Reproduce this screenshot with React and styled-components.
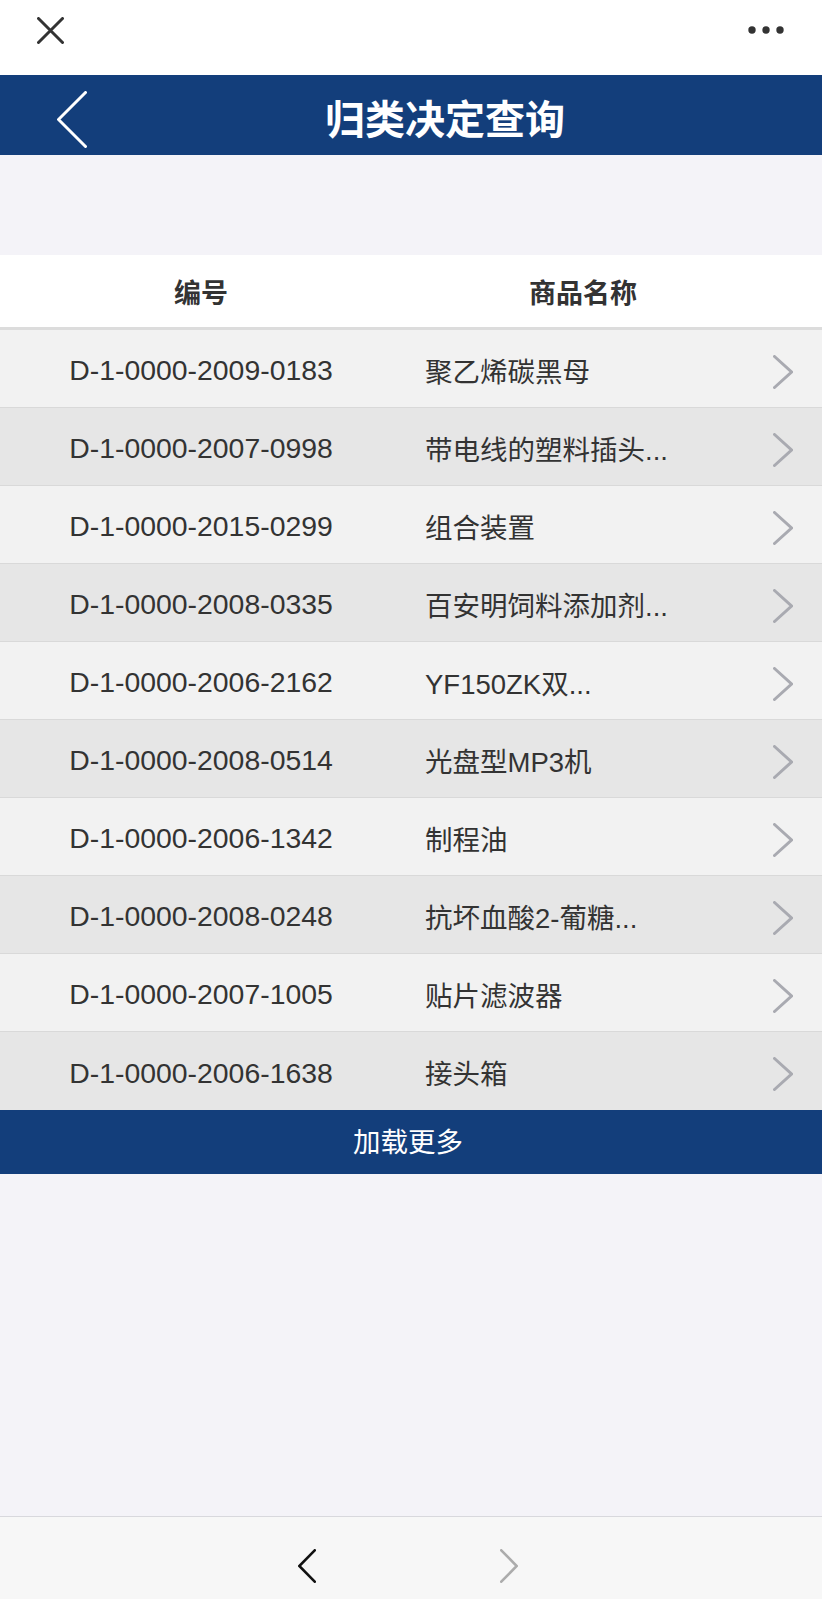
import React from "react";
import styled, { createGlobalStyle } from "styled-components";

const GlobalStyle = createGlobalStyle`
  html, body { margin: 0; padding: 0; }
  body {
    font-family: "Liberation Sans", "Noto Sans CJK SC", sans-serif;
    background: #f4f3f8;
  }
  * { box-sizing: border-box; }
`;

const Page = styled.div`
  height: 100vh;
  display: flex;
  flex-direction: column;
  background: #f4f3f8;
`;

const TopBar = styled.div`
  height: 75px;
  flex: none;
  background: #ffffff;
  display: flex;
  align-items: center;
  justify-content: space-between;
  padding: 0 38px 15px 37px;
`;

const NavHeader = styled.div`
  height: 80px;
  flex: none;
  background: #133e7b;
  display: flex;
  align-items: center;
  padding-right: 42px;
`;

const BackButton = styled.div`
  width: 110px;
  height: 100%;
  display: flex;
  align-items: center;
  padding-left: 57px;
  padding-top: 8px;
`;

const Title = styled.h1`
  flex: 1;
  margin: 0;
  text-align: center;
  color: #ffffff;
  font-family: "Noto Sans CJK SC", sans-serif;
  font-size: 40px;
  font-weight: 700;
  line-height: 80px;
  padding-top: 4px;
`;

const Gap = styled.div`
  height: 100px;
  flex: none;
`;

const Grid = styled.div`
  display: grid;
  grid-template-columns: 402px 362px 1fr;
  align-items: center;
`;

const HeadRow = styled(Grid)`
  height: 75px;
  background: #ffffff;
  border-bottom: 3px solid #dcdcdc;
`;

const HeadCell = styled.div`
  text-align: center;
  font-family: "Noto Sans CJK SC", sans-serif;
  font-weight: 700;
  font-size: 27px;
  color: #333333;
`;

const Row = styled(Grid)`
  height: 78px;
  background: ${(p) => (p.$alt ? "#e6e6e6" : "#f2f2f2")};
  &:not(:last-child) {
    border-bottom: 1px solid #d9d9d9;
  }
`;

const CodeCell = styled.div`
  text-align: center;
  font-size: 28.4px;
  color: #333333;
  padding-top: 4px;
`;

const NameCell = styled.div`
  padding-left: 23px;
  font-size: 27.5px;
  color: #333333;
  white-space: nowrap;
  padding-top: 2px;
`;

const ArrowCell = styled.div`
  display: flex;
  align-items: center;
  padding-left: 9px;
  padding-top: 6px;
`;

const LoadMore = styled.div`
  height: 64px;
  flex: none;
  background: #133e7b;
  color: #ffffff;
  display: flex;
  align-items: center;
  justify-content: center;
  font-family: "Noto Sans CJK SC", sans-serif;
  font-size: 27.5px;
  padding-right: 6px;
  padding-bottom: 4px;
`;

const Spacer = styled.div`
  flex: 1;
`;

const BottomBar = styled.div`
  height: 83px;
  flex: none;
  background: #f7f7f7;
  border-top: 1px solid #d8d8dd;
  display: flex;
  justify-content: center;
  align-items: flex-start;
  gap: 184px;
  padding-top: 32px;
  padding-right: 6px;
`;

const rows = [
  ["D-1-0000-2009-0183", "聚乙烯碳黑母"],
  ["D-1-0000-2007-0998", "带电线的塑料插头..."],
  ["D-1-0000-2015-0299", "组合装置"],
  ["D-1-0000-2008-0335", "百安明饲料添加剂..."],
  ["D-1-0000-2006-2162", "YF150ZK双..."],
  ["D-1-0000-2008-0514", "光盘型MP3机"],
  ["D-1-0000-2006-1342", "制程油"],
  ["D-1-0000-2008-0248", "抗坏血酸2-葡糖..."],
  ["D-1-0000-2007-1005", "贴片滤波器"],
  ["D-1-0000-2006-1638", "接头箱"],
];

const CloseIcon = () => (
  <svg width="27" height="27" viewBox="0 0 27 27">
    <path d="M1.5 1.5 L25.5 25.5 M25.5 1.5 L1.5 25.5" stroke="#333" strokeWidth="3" strokeLinecap="round" />
  </svg>
);

const MoreIcon = () => (
  <svg width="36" height="8" viewBox="0 0 36 8">
    <circle cx="4" cy="4" r="3.7" fill="#333" />
    <circle cx="18" cy="4" r="3.7" fill="#333" />
    <circle cx="32" cy="4" r="3.7" fill="#333" />
  </svg>
);

const Chevron = ({ dir = "right", color, width, height, stroke }) => {
  const d =
    dir === "right"
      ? `M${stroke / 2} ${stroke / 2} L${width - stroke / 2} ${height / 2} L${stroke / 2} ${height - stroke / 2}`
      : `M${width - stroke / 2} ${stroke / 2} L${stroke / 2} ${height / 2} L${width - stroke / 2} ${height - stroke / 2}`;
  return (
    <svg width={width} height={height} viewBox={`0 0 ${width} ${height}`}>
      <path d={d} fill="none" stroke={color} strokeWidth={stroke} strokeLinecap="round" strokeLinejoin="miter" />
    </svg>
  );
};

export default function App() {
  return (
    <>
      <GlobalStyle />
      <Page>
        <TopBar>
          <CloseIcon />
          <MoreIcon />
        </TopBar>
        <NavHeader>
          <BackButton>
            <Chevron dir="left" color="#ffffff" width={30} height={57} stroke={3} />
          </BackButton>
          <Title>归类决定查询</Title>
        </NavHeader>
        <Gap />
        <HeadRow>
          <HeadCell>编号</HeadCell>
          <HeadCell>商品名称</HeadCell>
          <div />
        </HeadRow>
        <div>
          {rows.map(([code, name], i) => (
            <Row key={code} $alt={i % 2 === 1}>
              <CodeCell>{code}</CodeCell>
              <NameCell>{name}</NameCell>
              <ArrowCell>
                <Chevron dir="right" color="#a9aab1" width={20} height={34} stroke={3} />
              </ArrowCell>
            </Row>
          ))}
        </div>
        <LoadMore>加载更多</LoadMore>
        <Spacer />
        <BottomBar>
          <Chevron dir="left" color="#111111" width={18} height={34} stroke={2.6} />
          <Chevron dir="right" color="#acacac" width={18} height={34} stroke={2.6} />
        </BottomBar>
      </Page>
    </>
  );
}
